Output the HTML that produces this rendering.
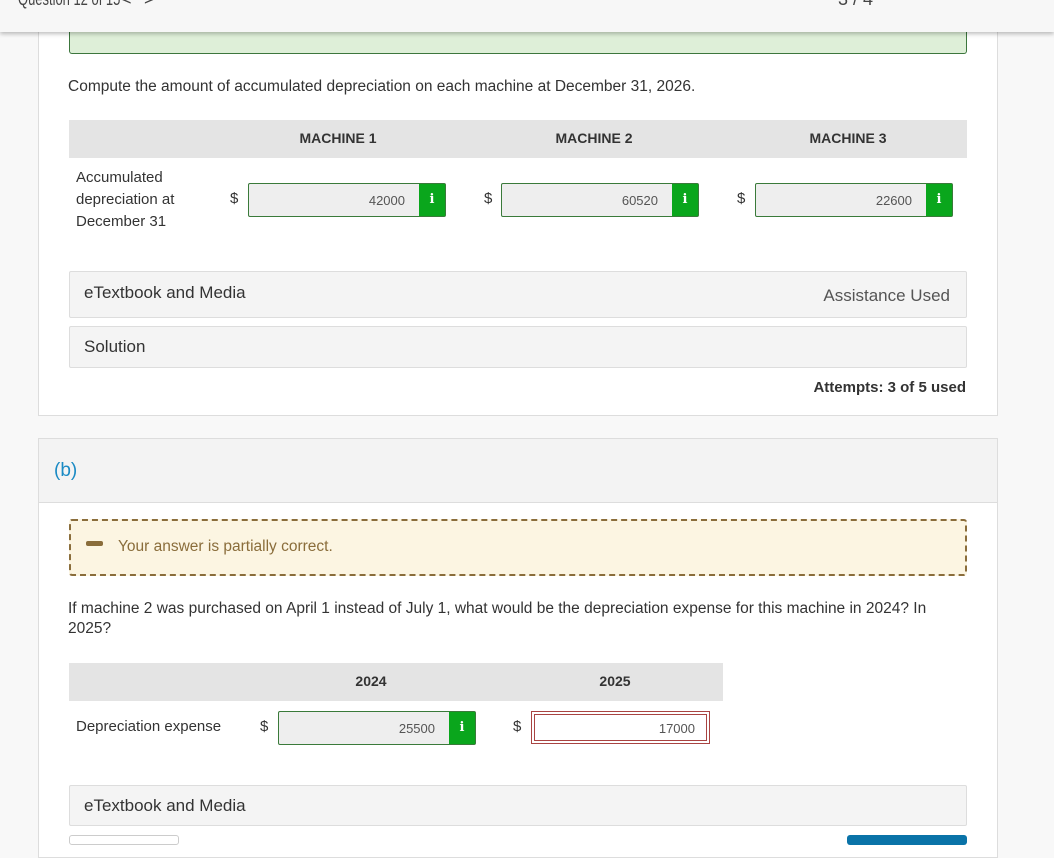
<!DOCTYPE html>
<html><head><style>
*{box-sizing:border-box;margin:0;padding:0}
body{width:1054px;height:840px;overflow:hidden;background:#f8f8f8;font-family:"Liberation Sans",Arial,sans-serif;color:#333;position:relative}
.abs{position:absolute;white-space:nowrap}
.card{position:absolute;left:38px;width:960px;background:#fff;border:1px solid #ddd}
.th{position:absolute;background:#e4e4e4;font-weight:bold;font-size:14px;color:#333}
.th span{position:absolute;top:10px;transform:translateX(-50%)}
.inp{position:absolute;height:34px;background:#eee;border:1px solid #3a7a3a;border-radius:2px;font-size:13px;color:#555;text-align:right;padding:9px 0}
.inp .v{position:absolute;right:40px;top:9px}
.inp .i{position:absolute;right:0;top:0;width:26px;height:32px;background:#0aa61c;color:#fff;font-weight:bold;font-family:"DejaVu Serif",serif;font-size:13px;text-align:center;line-height:32px}
.d{position:absolute;font-size:15px;color:#333}
.bar{position:absolute;left:69px;width:898px;background:#f4f4f4;border:1px solid #ddd;border-radius:2px;font-size:17px;color:#333}
</style></head><body>
<div class="card" style="top:20px;height:396px"></div>
<div class="abs" style="left:69px;top:20px;width:898px;height:34px;background:#deefd8;border:1px solid #3c763d;border-top:none;border-radius:0 0 3px 3px"></div>
<div class="abs" style="left:0;top:0;width:1054px;height:32px;background:#f7f7f7;box-shadow:0 2px 4px rgba(0,0,0,.25);overflow:hidden">
<div class="abs" style="left:18px;top:-11px;font-size:18px;color:#444;transform:scaleX(.72);transform-origin:left">Question 12 of 15</div>
<div class="abs" style="left:121px;top:-11px;font-size:18px;color:#444">&lt;</div>
<div class="abs" style="left:144px;top:-11px;font-size:18px;color:#444">&gt;</div>
<div class="abs" style="left:838px;top:-11px;font-size:18px;color:#444">3 / 4</div>
</div>
<div class="abs" style="left:68px;top:78px;font-size:15.5px">Compute the amount of accumulated depreciation on each machine at December 31, 2026.</div>
<div class="th" style="left:69px;top:120px;width:898px;height:38px"><span style="left:269px">MACHINE 1</span><span style="left:525px">MACHINE 2</span><span style="left:779px">MACHINE 3</span></div>
<div class="d" style="left:76px;top:167px;line-height:22px">Accumulated<br>depreciation at<br>December 31</div>
<div class="d" style="left:230px;top:190px">$</div>
<div class="inp" style="left:248px;top:183px;width:198px"><span class="v">42000</span><span class="i">i</span></div>
<div class="d" style="left:484px;top:190px">$</div>
<div class="inp" style="left:501px;top:183px;width:198px"><span class="v">60520</span><span class="i">i</span></div>
<div class="d" style="left:737px;top:190px">$</div>
<div class="inp" style="left:755px;top:183px;width:198px"><span class="v">22600</span><span class="i">i</span></div>
<div class="bar" style="top:271px;height:47px"><span class="abs" style="left:14px;top:11px">eTextbook and Media</span><span class="abs" style="right:16px;top:14px;color:#555">Assistance Used</span></div>
<div class="bar" style="top:326px;height:42px"><span class="abs" style="left:14px;top:10px">Solution</span></div>
<div class="abs" style="right:88px;top:379px;font-size:15px;font-weight:bold">Attempts: 3 of 5 used</div>

<div class="card" style="top:438px;height:420px"></div>
<div class="abs" style="left:39px;top:439px;width:958px;height:64px;background:#f3f3f3;border-bottom:1px solid #ddd"></div>
<div class="abs" style="left:54px;top:460px;font-size:19px;color:#1a8ac4">(b)</div>
<div class="abs" style="left:69px;top:519px;width:898px;height:57px;background:#fcf5e2;border:2px dashed #8a6d3b;border-radius:3px"></div>
<div class="abs" style="left:86px;top:541px;width:17px;height:5px;background:#8a6d3b;border-radius:2px"></div>
<div class="abs" style="left:118px;top:538px;font-size:15.5px;color:#8a6d3b">Your answer is partially correct.</div>
<div style="position:absolute;left:68px;top:599px;width:870px;font-size:15.5px;line-height:20px">If machine 2 was purchased on April 1 instead of July 1, what would be the depreciation expense for this machine in 2024? In<br>2025?</div>
<div class="th" style="left:69px;top:663px;width:654px;height:38px"><span style="left:302px">2024</span><span style="left:546px">2025</span></div>
<div class="d" style="left:76px;top:718px">Depreciation expense</div>
<div class="d" style="left:260px;top:718px">$</div>
<div class="inp" style="left:278px;top:711px;width:198px"><span class="v">25500</span><span class="i">i</span></div>
<div class="d" style="left:513px;top:718px">$</div>
<div class="abs" style="left:531px;top:711px;width:179px;height:33px;background:#fff;border:1px solid #a94442;padding:2px"><div style="border:1px solid #a94442;height:27px;font-size:13px;color:#555;text-align:right;padding:6px 11px 0 0">17000</div></div>
<div class="bar" style="top:785px;height:41px"><span class="abs" style="left:14px;top:10px">eTextbook and Media</span></div>
<div class="abs" style="left:69px;top:835px;width:110px;height:10px;background:#fff;border:1px solid #ccc;border-radius:3px"></div>
<div class="abs" style="left:847px;top:835px;width:120px;height:10px;background:#0a73a8;border-radius:3px"></div>
</body></html>
